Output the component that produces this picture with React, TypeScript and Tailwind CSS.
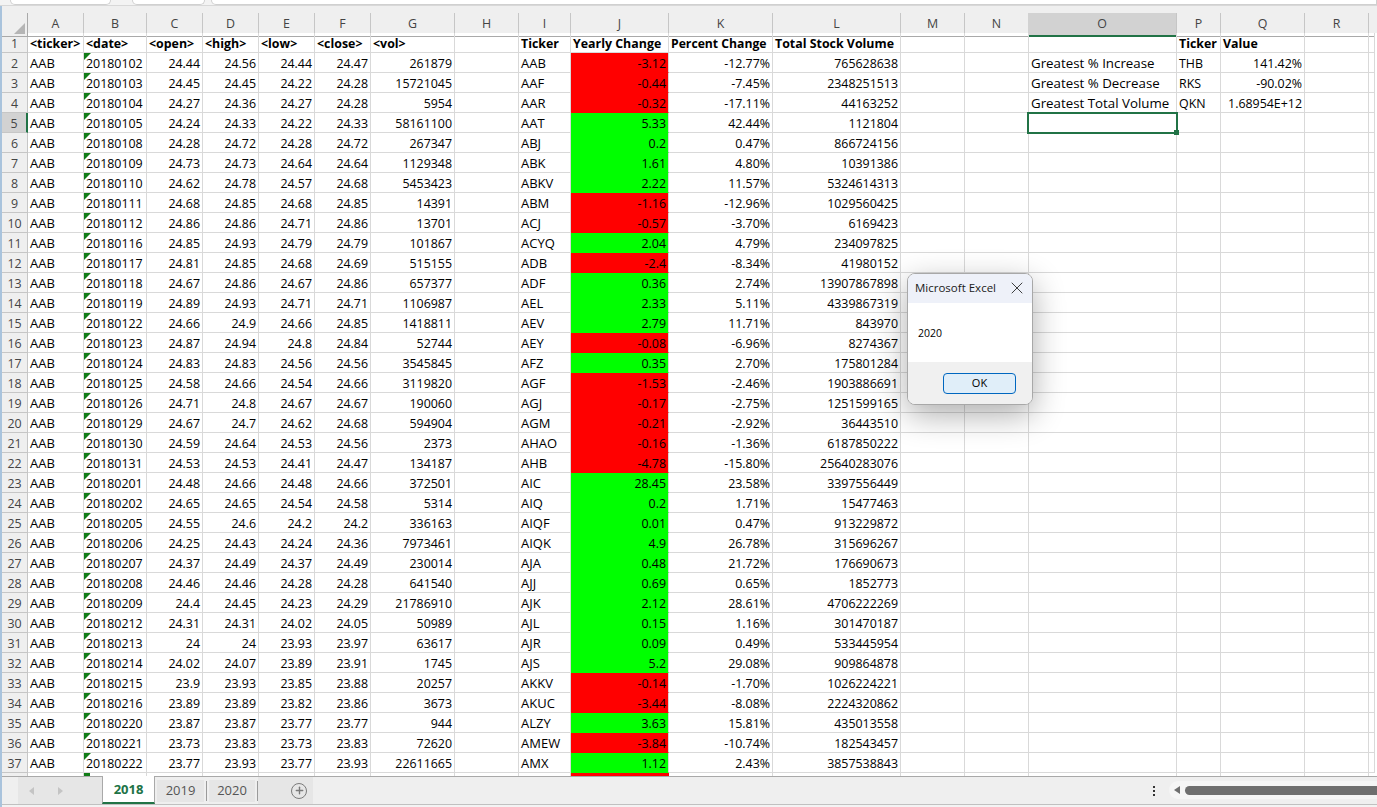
import { Plus, X } from "lucide-react";

const gridCols =
  "grid grid-cols-[26px_56px_63px_56px_56px_56px_56px_84px_64px_52px_98px_104px_128px_64px_64px_148px_44px_84px_64px_6px]";

const letters = "A B C D E F G H I J K L M N O P Q R".split(" ");

// date, open, high, low, close, vol, ticker, change, percent, total
const raw = `20180102 24.44 24.56 24.44 24.47 261879 AAB -3.12 -12.77% 765628638
20180103 24.45 24.45 24.22 24.28 15721045 AAF -0.44 -7.45% 2348251513
20180104 24.27 24.36 24.27 24.28 5954 AAR -0.32 -17.11% 44163252
20180105 24.24 24.33 24.22 24.33 58161100 AAT 5.33 42.44% 1121804
20180108 24.28 24.72 24.28 24.72 267347 ABJ 0.2 0.47% 866724156
20180109 24.73 24.73 24.64 24.64 1129348 ABK 1.61 4.80% 10391386
20180110 24.62 24.78 24.57 24.68 5453423 ABKV 2.22 11.57% 5324614313
20180111 24.68 24.85 24.68 24.85 14391 ABM -1.16 -12.96% 1029560425
20180112 24.86 24.86 24.71 24.86 13701 ACJ -0.57 -3.70% 6169423
20180116 24.85 24.93 24.79 24.79 101867 ACYQ 2.04 4.79% 234097825
20180117 24.81 24.85 24.68 24.69 515155 ADB -2.4 -8.34% 41980152
20180118 24.67 24.86 24.67 24.86 657377 ADF 0.36 2.74% 13907867898
20180119 24.89 24.93 24.71 24.71 1106987 AEL 2.33 5.11% 4339867319
20180122 24.66 24.9 24.66 24.85 1418811 AEV 2.79 11.71% 843970
20180123 24.87 24.94 24.8 24.84 52744 AEY -0.08 -6.96% 8274367
20180124 24.83 24.83 24.56 24.56 3545845 AFZ 0.35 2.70% 175801284
20180125 24.58 24.66 24.54 24.66 3119820 AGF -1.53 -2.46% 1903886691
20180126 24.71 24.8 24.67 24.67 190060 AGJ -0.17 -2.75% 1251599165
20180129 24.67 24.7 24.62 24.68 594904 AGM -0.21 -2.92% 36443510
20180130 24.59 24.64 24.53 24.56 2373 AHAO -0.16 -1.36% 6187850222
20180131 24.53 24.53 24.41 24.47 134187 AHB -4.78 -15.80% 25640283076
20180201 24.48 24.66 24.48 24.66 372501 AIC 28.45 23.58% 3397556449
20180202 24.65 24.65 24.54 24.58 5314 AIQ 0.2 1.71% 15477463
20180205 24.55 24.6 24.2 24.2 336163 AIQF 0.01 0.47% 913229872
20180206 24.25 24.43 24.24 24.36 7973461 AIQK 4.9 26.78% 315696267
20180207 24.37 24.49 24.37 24.49 230014 AJA 0.48 21.72% 176690673
20180208 24.46 24.46 24.28 24.28 641540 AJJ 0.69 0.65% 1852773
20180209 24.4 24.45 24.23 24.29 21786910 AJK 2.12 28.61% 4706222269
20180212 24.31 24.31 24.02 24.05 50989 AJL 0.15 1.16% 301470187
20180213 24 24 23.93 23.97 63617 AJR 0.09 0.49% 533445954
20180214 24.02 24.07 23.89 23.91 1745 AJS 5.2 29.08% 909864878
20180215 23.9 23.93 23.85 23.88 20257 AKKV -0.14 -1.70% 1026224221
20180216 23.89 23.89 23.82 23.86 3673 AKUC -3.44 -8.08% 2224320862
20180220 23.87 23.87 23.77 23.77 944 ALZY 3.63 15.81% 435013558
20180221 23.73 23.83 23.73 23.83 72620 AMEW -3.84 -10.74% 182543457
20180222 23.77 23.93 23.77 23.93 22611665 AMX 1.12 2.43% 3857538843`;

const rows = raw.split("\n").map((l) => l.split(" "));

const summary: Record<number, string[]> = {
  2: ["Greatest % Increase", "THB", "141.42%"],
  3: ["Greatest % Decrease", "RKS", "-90.02%"],
  4: ["Greatest Total Volume", "QKN", "1.68954E+12"],
};

function Cell({
  children,
  right,
  bold,
  label,
  className = "",
}: {
  children?: React.ReactNode;
  right?: boolean;
  bold?: boolean;
  label?: boolean;
  className?: string;
}) {
  return (
    <div
      className={`relative h-5 border-r border-b border-[#d9d9d9] whitespace-nowrap overflow-visible ${
        label ? "leading-[20px]" : "leading-[22px]"
      } ${right ? "pr-[2px] text-right" : "pl-[2px] text-left"} ${bold ? "font-bold" : ""} ${className}`}
    >
      {children}
    </div>
  );
}

function RowHead({ n, active }: { n: number; active?: boolean }) {
  return (
    <div
      className={`h-5 border-r border-b border-[#c6c6c6] text-center leading-[22px] text-[#444] ${
        active ? "bg-[#d2d2d2] border-r-2 border-r-[#217346]" : "bg-[#efefef]"
      }`}
    >
      {n}
    </div>
  );
}

function DataRow({ row, n }: { row: string[]; n: number }) {
  const [date, open, high, low, close, vol, ticker, change, percent, total] = row;
  const s = summary[n];
  const negative = change.startsWith("-");
  return (
    <div className={gridCols}>
      <RowHead n={n} active={n === 5} />
      <Cell label className="text-[13px]">AAB</Cell>
      <Cell>
        <span className="absolute top-0 left-0 h-0 w-0 border-t-[7px] border-r-[7px] border-t-[#117c17] border-r-transparent" />
        {date}
      </Cell>
      <Cell right>{open}</Cell>
      <Cell right>{high}</Cell>
      <Cell right>{low}</Cell>
      <Cell right>{close}</Cell>
      <Cell right>{vol}</Cell>
      <Cell />
      <Cell label className="text-[13px]">{ticker}</Cell>
      <Cell right className={negative ? "bg-[#ff0000] border-b-[#ff0000]" : "bg-[#00ff00] border-b-[#00ff00]"}>
        {change}
      </Cell>
      <Cell right>{percent}</Cell>
      <Cell right>{total}</Cell>
      <Cell />
      <Cell />
      <Cell label className="text-[13.3px]">
        {s ? s[0] : null}
        {n === 5 ? (
          <span className="absolute -top-px -left-[2px] z-10 h-[22px] w-[151px] border-2 border-[#217346]">
            <span className="absolute -right-[3px] -bottom-[3px] h-[5px] w-[5px] bg-[#217346]" />
          </span>
        ) : null}
      </Cell>
      <Cell>{s ? s[1] : null}</Cell>
      <Cell right>{s ? s[2] : null}</Cell>
      <Cell />
      <Cell />
    </div>
  );
}

function Dialog() {
  return (
    <div className="absolute top-[273px] left-[907px] flex h-[132px] w-[126px] flex-col overflow-hidden rounded-[8px] border border-[#a8a8a8] bg-white font-['Open_Sans',sans-serif] shadow-[0_10px_32px_rgba(0,0,0,0.32)]">
      <div className="flex h-[29px] items-center justify-between bg-[#eef1f9] pr-[5px] pb-[2px] pl-[7px] text-[11.5px] text-[#1a1a1a]">
        <span>Microsoft Excel</span>
        <X className="h-5 w-5" strokeWidth={1} />
      </div>
      <div className="flex flex-1 items-center pt-[2px] pl-[10px] text-[10.5px] text-black">2020</div>
      <div className="flex h-[42px] items-center justify-end bg-[#f0f0f0] pr-[16px]">
        <div className="flex h-[21px] w-[73px] items-center justify-center rounded-[4px] border border-[#0067c0] bg-[#e0eef9] text-[11px] text-black">
          OK
        </div>
      </div>
    </div>
  );
}

export default function App() {
  return (
    <div className="relative flex h-[807px] w-[1377px] flex-col overflow-hidden bg-[#efefef] font-['Open_Sans',sans-serif] text-[12.4px] text-black">
      {/* ribbon leftovers */}
      <div className="flex h-[6px] shrink-0 gap-[6px] border-b border-[#d8d8d8] bg-[#f3f3f3]">
        <div className="ml-[10px] h-[5px] w-[101px] rounded-b-[5px] border border-t-0 border-[#d0d0d0] bg-white" />
        <div className="ml-[15px] h-[5px] w-[73px] rounded-b-[5px] border border-t-0 border-[#d0d0d0] bg-white" />
        <div className="h-[5px] flex-1 rounded-bl-[5px] border border-t-0 border-[#d0d0d0] bg-white" />
      </div>

      <div className="flex flex-1 overflow-hidden">
        <div className="w-[2px] shrink-0 bg-[#a9c3dc]" />
        <div className="flex flex-1 flex-col bg-white">
          <div className="h-[7px] shrink-0 bg-[#efefef]" />
          {/* column header */}
          <div className={`${gridCols} h-5 bg-[#efefef]`}>
            <div className="relative border-r border-b border-[#a9a9a9]">
              <span className="absolute right-[2px] bottom-[2px] h-0 w-0 border-b-[11px] border-l-[11px] border-b-[#b5b5b5] border-l-transparent" />
            </div>
            {letters.map((l) => (
              <div
                key={l}
                className={`border-r text-center leading-[22px] text-[#444] ${
                  l === "O"
                    ? "-ml-px border-b-2 border-[#c6c6c6] border-b-[#217346] bg-[#d2d2d2] text-[#0f5c34]"
                    : "border-b border-[#c6c6c6] border-b-[#a9a9a9]"
                }`}
              >
                {l}
              </div>
            ))}
            <div className="border-b border-[#a9a9a9]" />
          </div>

          {/* header row */}
          <div className={gridCols}>
            <RowHead n={1} />
            <Cell bold>&lt;ticker&gt;</Cell>
            <Cell bold>&lt;date&gt;</Cell>
            <Cell bold>&lt;open&gt;</Cell>
            <Cell bold>&lt;high&gt;</Cell>
            <Cell bold>&lt;low&gt;</Cell>
            <Cell bold>&lt;close&gt;</Cell>
            <Cell bold>&lt;vol&gt;</Cell>
            <Cell />
            <Cell bold>Ticker</Cell>
            <Cell bold>Yearly Change</Cell>
            <Cell bold className="text-[12.2px]">Percent Change</Cell>
            <Cell bold>Total Stock Volume</Cell>
            <Cell />
            <Cell />
            <Cell />
            <Cell bold>Ticker</Cell>
            <Cell bold>Value</Cell>
            <Cell />
            <Cell />
          </div>

          {rows.map((row, i) => (
            <DataRow key={row[0]} row={row} n={i + 2} />
          ))}

          {/* row 38 cut off by the tab bar */}
          <div className={`${gridCols} h-[3px] overflow-hidden`}>
            <div className="border-r border-[#c6c6c6] bg-[#efefef]" />
            <div className="border-r border-[#d9d9d9]" />
            <div className="relative border-r border-[#d9d9d9]">
              <span className="absolute top-0 left-0 h-[3px] w-[6px] bg-[#117c17]" />
            </div>
            <div className="border-r border-[#d9d9d9]" />
            <div className="border-r border-[#d9d9d9]" />
            <div className="border-r border-[#d9d9d9]" />
            <div className="border-r border-[#d9d9d9]" />
            <div className="border-r border-[#d9d9d9]" />
            <div className="border-r border-[#d9d9d9]" />
            <div className="border-r border-[#d9d9d9]" />
            <div className="bg-[#ff0000]" />
            <div className="border-r border-[#d9d9d9]" />
            <div className="border-r border-[#d9d9d9]" />
            <div className="border-r border-[#d9d9d9]" />
            <div className="border-r border-[#d9d9d9]" />
            <div className="border-r border-[#d9d9d9]" />
            <div className="border-r border-[#d9d9d9]" />
            <div className="border-r border-[#d9d9d9]" />
            <div className="border-r border-[#d9d9d9]" />
          </div>

          {/* sheet tabs */}
          <div className="flex h-[28px] shrink-0 items-stretch border-t border-[#a9a9a9] bg-[#efefef] text-[13px]">
            <div className="ml-[16px] flex w-[84px] items-center gap-[24px] bg-[#e6e6e6] pl-[11px]">
              <span className="h-0 w-0 border-y-[4px] border-r-[5px] border-y-transparent border-r-[#c4c4c4]" />
              <span className="h-0 w-0 border-y-[4px] border-l-[5px] border-y-transparent border-l-[#c4c4c4]" />
            </div>
            <div className="-mt-px flex w-[53px] items-center justify-center border-x border-x-[#a9a9a9] border-b-2 border-b-[#217346] bg-white pt-[2px] font-bold text-[#217346]">
              2018
            </div>
            <div className="flex items-center">
              <div className="mx-[2px] flex h-[22px] w-[47px] items-center justify-center bg-[#e6e6e6] pt-[1px] text-[#555]">2019</div>
              <div className="h-[20px] w-px bg-[#9a9a9a]" />
              <div className="mx-[2px] flex h-[22px] w-[46px] items-center justify-center bg-[#e6e6e6] pt-[1px] text-[#555]">2020</div>
              <div className="h-[20px] w-px bg-[#9a9a9a]" />
            </div>
            <div className="flex w-[55px] items-center justify-end bg-[#e6e6e6] pr-[6px]">
              <div className="flex h-[16px] w-[16px] items-center justify-center rounded-full border-[1.5px] border-[#7a7a7a]">
                <Plus className="h-[11px] w-[11px] text-[#7a7a7a]" strokeWidth={3} />
              </div>
            </div>
            <div className="flex-1" />
            <div className="mr-[14px] flex flex-col items-center justify-center gap-[2px]">
              <span className="h-[2px] w-[2px] bg-[#333]" />
              <span className="h-[2px] w-[2px] bg-[#333]" />
              <span className="h-[2px] w-[2px] bg-[#333]" />
            </div>
            <div className="mt-[4px] mb-[5px] flex w-[208px] items-center rounded-l-full bg-[#f5f5f5] pl-[5px]">
              <span className="h-0 w-0 border-y-[4px] border-r-[6px] border-y-transparent border-r-[#6e6e6e]" />
              <div className="ml-[5px] h-[9px] flex-1 rounded-l-full bg-[#6e6e6e]" />
            </div>
          </div>
          <div className="h-[3px] shrink-0 border-t border-[#c0c0c0] bg-[#f3f3f3]" />
        </div>
      </div>

      <Dialog />
    </div>
  );
}
